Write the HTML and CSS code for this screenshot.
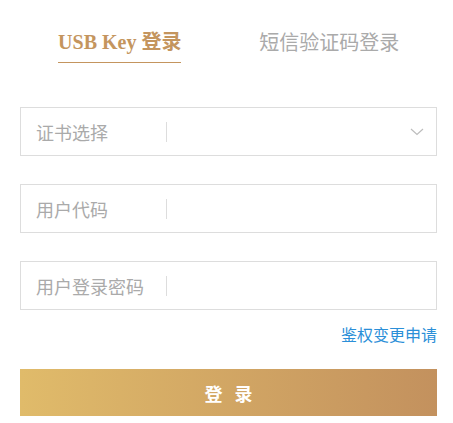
FILE: index.html
```html
<!DOCTYPE html>
<html lang="zh-CN">
<head>
    <meta charset="UTF-8">
    <meta name="viewport" content="width=device-width, initial-scale=1.0">
    <title>登录</title>
    <link rel="stylesheet" href="styles.css">
</head>
<body>
    <div class="login-panel">
        <div class="login-tabs">
            <div class="tab-item active"><span class="tab-text">USB Key 登录</span></div>
            <div class="tab-item"><span class="tab-text">短信验证码登录</span></div>
        </div>

        <form class="login-form" onsubmit="return false;">
            <div class="form-field">
                <span class="field-label">证书选择</span>
                <span class="field-divider"></span>
                <select class="field-input field-select"></select>
                <svg class="select-arrow" width="14" height="8" viewBox="0 0 14 8">
                    <path d="M1 1 L7 6.5 L13 1" fill="none" stroke="#bdbdbd" stroke-width="1.2"/>
                </svg>
            </div>

            <div class="form-field">
                <span class="field-label">用户代码</span>
                <span class="field-divider"></span>
                <input class="field-input" type="text">
            </div>

            <div class="form-field">
                <span class="field-label">用户登录密码</span>
                <span class="field-divider"></span>
                <input class="field-input" type="password">
            </div>

            <div class="form-links">
                <a href="#" class="apply-link">鉴权变更申请</a>
            </div>

            <button class="login-button" type="submit">登 录</button>
        </form>
    </div>
</body>
</html>
```

FILE: styles.css
```css
* {
    margin: 0;
    padding: 0;
    box-sizing: border-box;
}

body {
    font-family: "Noto Sans CJK SC", "Microsoft YaHei", sans-serif;
    background: #fff;
    color: #333;
}

.login-panel {
    padding: 0 16px 0 20px;
}

.login-tabs {
    display: flex;
    margin: 0 3px 0 -5px;
    padding-top: 28px;
}

.tab-item {
    flex: 1;
    text-align: center;
}

.tab-text {
    display: inline-block;
    font-size: 20px;
    line-height: 28px;
    padding-bottom: 6px;
    color: #aaa;
    border-bottom: 1px solid transparent;
}

.tab-item.active .tab-text {
    font-family: "Liberation Serif", "Noto Sans CJK SC", serif;
    font-weight: bold;
    color: #c4955e;
    border-bottom-color: #c4955e;
}

.login-form {
    margin-top: 44px;
}

.form-field {
    position: relative;
    display: flex;
    align-items: center;
    height: 49px;
    border: 1px solid #ddd;
    margin-bottom: 28px;
    padding-left: 15px;
}

.form-field:nth-child(3) {
    margin-bottom: 0;
}

.field-label {
    width: 130px;
    font-size: 18px;
    color: #aaa;
    white-space: nowrap;
}

.field-divider {
    width: 1px;
    height: 20px;
    background: #ddd;
}

.field-input {
    flex: 1;
    height: 100%;
    border: none;
    outline: none;
    background: transparent;
    font-size: 16px;
    padding: 0 12px;
}

.field-select {
    appearance: none;
    -webkit-appearance: none;
}

.select-arrow {
    position: absolute;
    right: 12px;
    top: 20px;
    pointer-events: none;
}

.form-links {
    margin-top: 13px;
    text-align: right;
    line-height: 22px;
}

.apply-link {
    font-size: 16px;
    color: #2b8fd8;
    text-decoration: none;
}

.login-button {
    display: block;
    width: 100%;
    height: 47px;
    margin-top: 24px;
    border: none;
    background: linear-gradient(90deg, #e0bb6a 0%, #c3915e 100%);
    color: #fff;
    font-family: "Noto Sans CJK SC", sans-serif;
    font-size: 18px;
    font-weight: bold;
    letter-spacing: 4px;
    padding-left: 4px;
    cursor: pointer;
}
```
